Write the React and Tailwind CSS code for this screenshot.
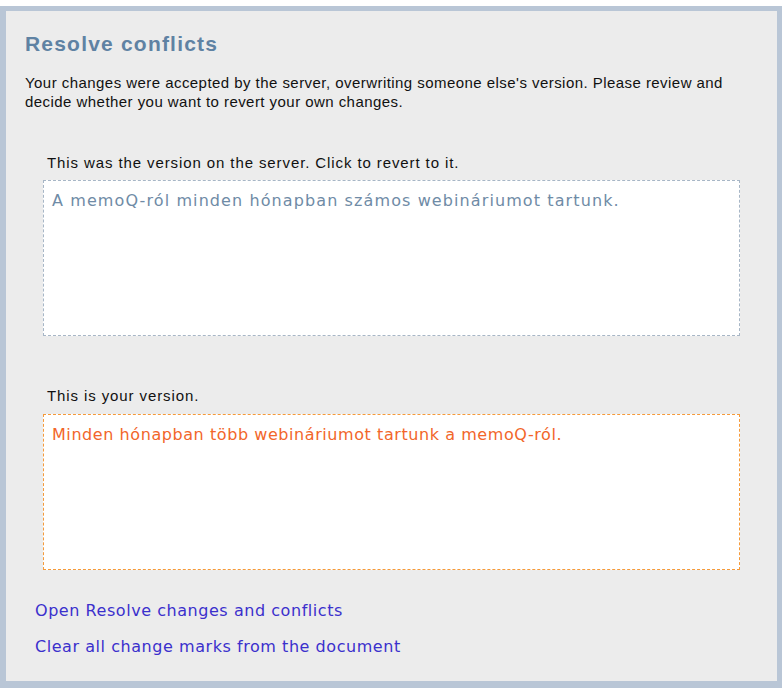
export default function App() {
  return (
    <div className="w-[782px] h-[688px] bg-white pt-[6px] overflow-hidden">
      <div className="h-[682px] bg-[#ececec] border-t-[5px] border-r-[5px] border-b-[7px] border-l-[6px] border-[#b9c6d6] flex flex-col" style={{ fontFamily: '"Liberation Sans", Arial, sans-serif' }}>
        <div className="pl-[19px] pt-[21px]">
          <h1 className="text-[21px] leading-[24px] font-bold text-[#5f82a3] tracking-[1.2px]">Resolve conflicts</h1>
          <p className="mt-[17px] text-[15px] leading-[19px] text-[#111] tracking-[0.45px] pr-[30px]">
            Your changes were accepted by the server, overwriting someone else's version. Please review and decide whether you want to revert your own changes.
          </p>
        </div>

        <div className="pl-[41px] mt-[43px] text-[15px] leading-[18px] text-[#111] tracking-[0.9px]">This was the version on the server. Click to revert to it.</div>
        <div className="ml-[37px] mt-[8px] w-[697px] h-[156px] bg-white border border-dashed border-[#a7b6c6] px-[8px] pt-[10px]" style={{ fontFamily: '"DejaVu Sans", Verdana, sans-serif' }}>
          <div className="text-[16px] leading-[20px] text-[#6f8ba6] tracking-[1.1px]">A memoQ-ról minden hónapban számos webináriumot tartunk.</div>
        </div>

        <div className="pl-[41px] mt-[51px] text-[15px] leading-[18px] text-[#111] tracking-[0.9px]">This is your version.</div>
        <div className="ml-[37px] mt-[9px] w-[697px] h-[156px] bg-white border border-dashed border-[#f59a3a] px-[8px] pt-[10px]" style={{ fontFamily: '"DejaVu Sans", Verdana, sans-serif' }}>
          <div className="text-[16px] leading-[20px] text-[#f2662a] tracking-[0.57px]">Minden hónapban több webináriumot tartunk a memoQ-ról.</div>
        </div>

        <div className="pl-[29px] mt-[31px] flex flex-col gap-[16px] text-[16px] leading-[20px] text-[#3b30cc] tracking-[0.55px]" style={{ fontFamily: '"DejaVu Sans", Verdana, sans-serif' }}>
          <a className="cursor-pointer">Open Resolve changes and conflicts</a>
          <a className="cursor-pointer">Clear all change marks from the document</a>
        </div>
      </div>
    </div>
  );
}
